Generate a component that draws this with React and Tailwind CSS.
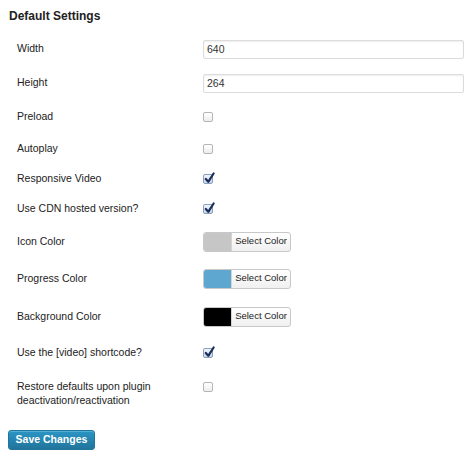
import React, { useState } from 'react';

const font = { fontFamily: '"Liberation Sans", Arial, sans-serif' };

function Checkbox({ checked, onChange }) {
  return (
    <button
      type="button"
      onClick={() => onChange(!checked)}
      className={`relative block w-[10px] h-[10px] rounded-[2px] border ${checked ? 'border-[#8a9fb8] bg-gradient-to-b from-[#f2f6fb] to-[#c9d8ea]' : 'border-[#b5b5b5] bg-gradient-to-b from-white to-[#ededed]'}`}
    >
      {checked && (
        <svg className="absolute left-[0px] top-[-3px] w-[11px] h-[12px]" viewBox="0 0 11 12">
          <path d="M1.8 7 L4.3 9.8 L9.6 1.5" fill="none" stroke="#1b2d5c" strokeWidth="2.2" strokeLinecap="round" strokeLinejoin="round" />
        </svg>
      )}
    </button>
  );
}

function ColorPicker({ color }) {
  return (
    <div className="flex w-[88px] h-[20px] rounded-[3px] border border-[#c8c8c8] overflow-hidden bg-gradient-to-b from-white to-[#f0f0f0]">
      <div className="w-[27px] h-full" style={{ background: color }} />
      <div className="flex-1 flex items-center justify-center text-[9.5px] text-[#222] border-l border-[#d4d4d4]">Select Color</div>
    </div>
  );
}

function Row({ label, h, children }) {
  return (
    <div className="flex items-center" style={{ height: h }}>
      <div className="w-[203px] shrink-0 pl-[17px] text-[10.5px] text-[#222]">{label}</div>
      <div className="flex-1">{children}</div>
    </div>
  );
}

export default function App() {
  const [width, setWidth] = useState('640');
  const [height, setHeight] = useState('264');
  const [opts, setOpts] = useState({
    preload: false,
    autoplay: false,
    responsive: true,
    cdn: true,
    shortcode: true,
    restore: false,
  });

  const toggle = (key) => (v) => setOpts({ ...opts, [key]: v });

  return (
    <div className="w-[474px] h-[462px] bg-white" style={font}>
      <h3 className="pl-[9px] pt-[7px] h-[32px] text-[12px] font-bold text-[#222]">Default Settings</h3>

      <Row label="Width" h={34}>
        <input value={width} onChange={(e) => setWidth(e.target.value)} className="block w-[261px] h-[19px] px-[3px] border border-[#dcdcdc] rounded-[2px] text-[10.5px] text-[#333] shadow-[inset_0_1px_2px_rgba(0,0,0,0.07)] outline-none" />
      </Row>
      <Row label="Height" h={34}>
        <input value={height} onChange={(e) => setHeight(e.target.value)} className="block w-[261px] h-[19px] px-[3px] border border-[#dcdcdc] rounded-[2px] text-[10.5px] text-[#333] shadow-[inset_0_1px_2px_rgba(0,0,0,0.07)] outline-none" />
      </Row>
      <Row label="Preload" h={33}>
        <Checkbox checked={opts.preload} onChange={toggle('preload')} />
      </Row>
      <Row label="Autoplay" h={31}>
        <Checkbox checked={opts.autoplay} onChange={toggle('autoplay')} />
      </Row>
      <Row label="Responsive Video" h={30}>
        <Checkbox checked={opts.responsive} onChange={toggle('responsive')} />
      </Row>
      <Row label="Use CDN hosted version?" h={30}>
        <Checkbox checked={opts.cdn} onChange={toggle('cdn')} />
      </Row>
      <Row label="Icon Color" h={35}>
        <ColorPicker color="#c6c6c6" />
      </Row>
      <Row label="Progress Color" h={39}>
        <ColorPicker color="#5da7d1" />
      </Row>
      <Row label="Background Color" h={37}>
        <ColorPicker color="#000000" />
      </Row>
      <Row label="Use the [video] shortcode?" h={36}>
        <Checkbox checked={opts.shortcode} onChange={toggle('shortcode')} />
      </Row>

      <div className="flex items-start h-[55px] pt-[8px]">
        <div className="w-[203px] shrink-0 pl-[17px] text-[10.5px] leading-[14px] text-[#222]">
          Restore defaults upon plugin<br />deactivation/reactivation
        </div>
        <div className="pt-[3px]">
          <Checkbox checked={opts.restore} onChange={toggle('restore')} />
        </div>
      </div>

      <div className="pl-[8px]">
        <button className="w-[87px] h-[20px] rounded-[3px] border border-[#21759b] bg-gradient-to-b from-[#2a95c5] to-[#21759b] text-white text-[10.5px] font-bold shadow-[inset_0_1px_0_rgba(120,200,230,0.5)]">
          Save Changes
        </button>
      </div>
    </div>
  );
}
